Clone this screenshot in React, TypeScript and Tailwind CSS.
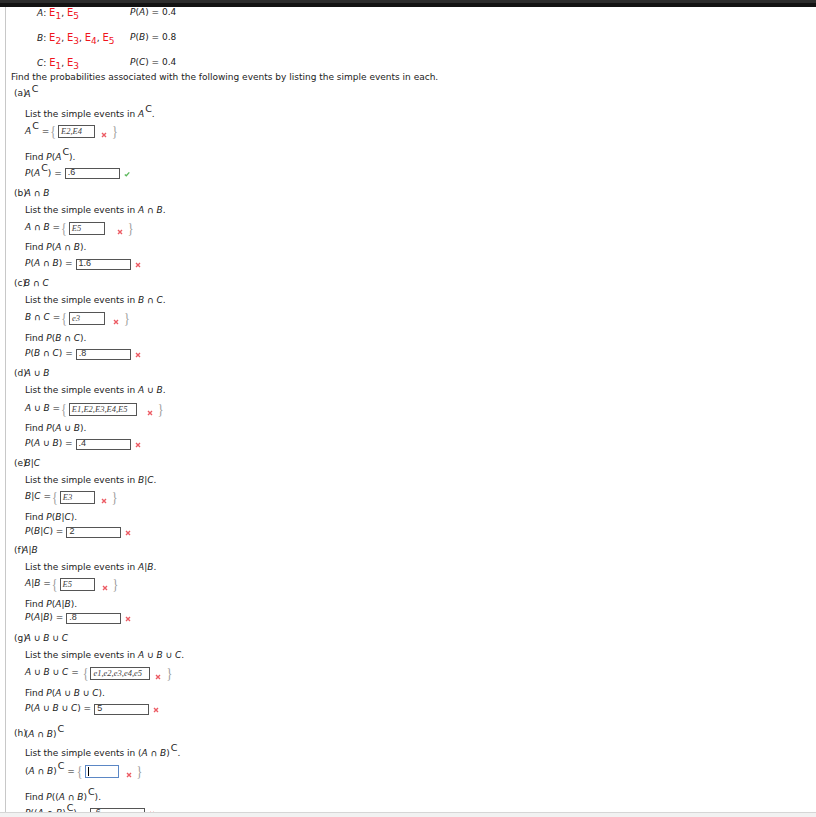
import React from "react";

const Sup = ({ children }: { children: React.ReactNode }) => (
  <span className="relative -top-[5px] ml-[1px] text-[9.5px] not-italic">{children}</span>
);

const I = ({ children }: { children: React.ReactNode }) => <i>{children}</i>;

const Red = ({ n }: { n: string }) => (
  <span className="text-[10px] text-[#f0141c]">
    E<span className="relative top-[3px] text-[9px]">{n}</span>
  </span>
);

const XMark = () => (
  <svg width="6" height="6" viewBox="0 0 6 6" className="shrink-0">
    <path d="M1 1L5 5M5 1L1 5" stroke="#ec5a63" strokeWidth="1.4" />
  </svg>
);

const Check = () => (
  <svg width="6" height="6" viewBox="0 0 6 6" className="shrink-0">
    <path d="M0.8 3.4L2.3 4.8L5.3 1.4" stroke="#5cb85c" strokeWidth="1.3" fill="none" />
  </svg>
);

const Brace = ({ open }: { open?: boolean }) => (
  <span className="inline-block scale-y-125 font-['Liberation_Serif',serif] text-[12px] leading-none text-[#9a9a9a]">
    {open ? "{" : "}"}
  </span>
);

type SecProps = {
  label: string;
  title: React.ReactNode;
  expr: React.ReactNode;
  setW: string;
  setVal: string;
  focused?: boolean;
  xGap: string;
  pre: string;
  prob: React.ReactNode;
  probVal: string;
  ok?: boolean;
  mt: string;
  m1: string;
  m2: string;
  m3: string;
  m4: string;
};

const Section = (p: SecProps) => (
  <div className={p.mt}>
    <div className="flex h-[14px] items-center pl-[8px]">
      <span>{p.label}</span>
      <span className="-ml-[2px]">{p.title}</span>
    </div>
    <div className={`flex h-[14px] items-center pl-[19px] ${p.m1}`}>
      <span>
        List the simple events in {p.expr}.
      </span>
    </div>
    <div className={`flex h-[14px] items-center pl-[19px] ${p.m2}`}>
      <span className={p.pre}>{p.expr} =</span>
      <Brace open />
      <div
        className={`ml-[2px] flex h-[13px] items-center border px-[2px] font-['Liberation_Serif',serif] text-[8.5px] text-[#444] ${p.setW} ${
          p.focused ? "border-[#5b87c5]" : "border-[#555]"
        }`}
      >
        {p.focused ? <span className="h-[9px] w-[1px] bg-black" /> : <i>{p.setVal}</i>}
      </div>
      <span className={`mt-[8px] ${p.xGap}`}>
        <XMark />
      </span>
      <span className="ml-[5px] mt-[2px]">
        <Brace />
      </span>
    </div>
    <div className={`flex h-[14px] items-center pl-[19px] ${p.m3}`}>
      <span>Find {p.prob}.</span>
    </div>
    <div className={`flex h-[14px] items-center pl-[19px] ${p.m4}`}>
      <span className="mr-[3px]">{p.prob} =</span>
      <div className="flex h-[11px] w-[55px] items-center border border-[#555] pl-[2px] font-['Liberation_Sans',sans-serif] text-[9px] text-[#333]">
        {p.probVal}
      </div>
      <span className="ml-[4px] mt-[2px]">{p.ok ? <Check /> : <XMark />}</span>
    </div>
  </div>
);

export default function App() {
  const AC = (
    <>
      <I>A</I>
      <Sup>C</Sup>
    </>
  );
  const AnB = (
    <>
      <I>A</I> ∩ <I>B</I>
    </>
  );
  const BnC = (
    <>
      <I>B</I> ∩ <I>C</I>
    </>
  );
  const AuB = (
    <>
      <I>A</I> ∪ <I>B</I>
    </>
  );
  const BgC = (
    <>
      <I>B</I>|<I>C</I>
    </>
  );
  const AgB = (
    <>
      <I>A</I>|<I>B</I>
    </>
  );
  const AuBuC = (
    <>
      <I>A</I> ∪ <I>B</I> ∪ <I>C</I>
    </>
  );
  const AnBC = (
    <>
      (<I>A</I> ∩ <I>B</I>)<Sup>C</Sup>
    </>
  );
  return (
    <div className="flex h-[817px] w-[816px] flex-col overflow-hidden bg-white font-['DejaVu_Sans',Verdana,sans-serif] text-[9px] text-[#222]">
      <div className="h-[3px] shrink-0 bg-[#2d2d2d]" />
      <div className="h-[4px] shrink-0 bg-[#131313]" />
      <div className="ml-[5px] flex-1 overflow-hidden border-l border-[#c8c8c8]">
        <div className="pl-[31px]">
          <div className="flex h-[12px] items-center">
            <span className="w-[93px]">
              <I>A</I>: <Red n="1" />, <Red n="5" />
            </span>
            <span>
              <I>P</I>(<I>A</I>) = 0.4
            </span>
          </div>
          <div className="mt-[12px] flex h-[14px] items-center">
            <span className="w-[93px]">
              <I>B</I>: <Red n="2" />, <Red n="3" />, <Red n="4" />, <Red n="5" />
            </span>
            <span>
              <I>P</I>(<I>B</I>) = 0.8
            </span>
          </div>
          <div className="mt-[11px] flex h-[14px] items-center">
            <span className="w-[93px]">
              <I>C</I>: <Red n="1" />, <Red n="3" />
            </span>
            <span>
              <I>P</I>(<I>C</I>) = 0.4
            </span>
          </div>
        </div>
        <div className="mt-[1px] flex h-[14px] items-center pl-[5px]">
          <span>Find the probabilities associated with the following events by listing the simple events in each.</span>
        </div>
        <Section
          label="(a)"
          title={AC}
          expr={AC}
          setW="w-[37px]"
          setVal="E2,E4"
          xGap="ml-[6px]"
          pre="mr-[1px]"
          prob={<><I>P</I>({AC})</>}
          probVal=".6"
          ok
          mt="mt-[2px]"
          m1="mt-[6px]"
          m2="mt-[3px]"
          m3="mt-[12px]"
          m4="mt-[2px]"
        />
        <Section
          label="(b)"
          title={AnB}
          expr={AnB}
          setW="w-[36px]"
          setVal="E5"
          xGap="ml-[12px]"
          pre="mr-[1px]"
          prob={<><I>P</I>({AnB})</>}
          probVal="1.6"
          mt="mt-[7px]"
          m1="mt-[3px]"
          m2="mt-[3px]"
          m3="mt-[6px]"
          m4="mt-[2px]"
        />
        <Section
          label="(c)"
          title={BnC}
          expr={BnC}
          setW="w-[36px]"
          setVal="e3"
          xGap="ml-[8px]"
          pre="mr-[1px]"
          prob={<><I>P</I>({BnC})</>}
          probVal=".8"
          mt="mt-[6px]"
          m1="mt-[3px]"
          m2="mt-[3px]"
          m3="mt-[7px]"
          m4="mt-[1px]"
        />
        <Section
          label="(d)"
          title={AuB}
          expr={AuB}
          setW="w-[68px]"
          setVal="E1,E2,E3,E4,E5"
          xGap="ml-[10px]"
          pre="mr-[1px]"
          prob={<><I>P</I>({AuB})</>}
          probVal=".4"
          mt="mt-[6px]"
          m1="mt-[3px]"
          m2="mt-[4px]"
          m3="mt-[6px]"
          m4="mt-[1px]"
        />
        <Section
          label="(e)"
          title={BgC}
          expr={BgC}
          setW="w-[35px]"
          setVal="E3"
          xGap="ml-[6px]"
          pre="mr-[1px]"
          prob={<><I>P</I>({BgC})</>}
          probVal="2"
          mt="mt-[6px]"
          m1="mt-[3px]"
          m2="mt-[2px]"
          m3="mt-[7px]"
          m4="mt-[0px]"
        />
        <Section
          label="(f)"
          title={AgB}
          expr={AgB}
          setW="w-[35px]"
          setVal="E5"
          xGap="ml-[7px]"
          pre="mr-[1px]"
          prob={<><I>P</I>({AgB})</>}
          probVal=".8"
          mt="mt-[5px]"
          m1="mt-[3px]"
          m2="mt-[2px]"
          m3="mt-[7px]"
          m4="-mt-[1px]"
        />
        <Section
          label="(g)"
          title={AuBuC}
          expr={AuBuC}
          setW="w-[60px]"
          setVal="e1,e2,e3,e4,e5"
          xGap="ml-[5px]"
          pre="mr-[4px]"
          prob={<><I>P</I>({AuBuC})</>}
          probVal="5"
          mt="mt-[7px]"
          m1="mt-[3px]"
          m2="mt-[3px]"
          m3="mt-[7px]"
          m4="mt-[1px]"
        />
        <Section
          label="(h)"
          title={AnBC}
          expr={AnBC}
          setW="w-[34px]"
          setVal=""
          focused
          xGap="ml-[7px]"
          pre="mr-[2px]"
          prob={<><I>P</I>({AnBC})</>}
          probVal=".6"
          mt="mt-[11px]"
          m1="mt-[5px]"
          m2="mt-[4px]"
          m3="mt-[12px]"
          m4="mt-[2px]"
        />
      </div>
      <div className="h-[5px] shrink-0 border-t border-[#d6d6d6] bg-[#f2f2f2]" />
    </div>
  );
}
